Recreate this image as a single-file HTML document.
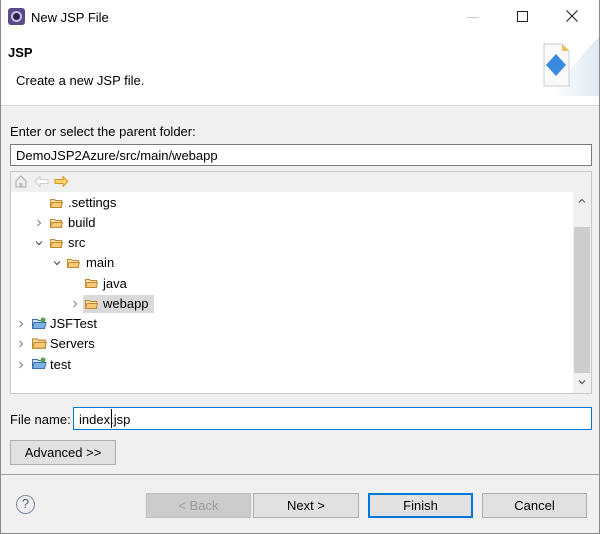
<!DOCTYPE html>
<html><head><meta charset="utf-8"><style>
*{margin:0;padding:0;box-sizing:border-box}
body{width:600px;height:534px;position:relative;overflow:hidden;background:#f0f0f0;font-family:"Liberation Sans",sans-serif;font-size:12.5px;color:#000}
.a{position:absolute}
.win{position:absolute;left:0;top:0;width:600px;height:534px;border:1px solid #8a8a8a;border-top:none;pointer-events:none}
.t{position:absolute;white-space:nowrap}
.btn{position:absolute;height:25px;border:1px solid #adadad;background:#e1e1e1;text-align:center;line-height:23px;font-size:13px}
.fold{position:absolute;width:13px;height:10px}
.arr{position:absolute;width:8px;height:8px}
</style></head><body>
<svg width="0" height="0" style="position:absolute"><defs>
<symbol id="f" viewBox="0 0 13 10"><path d="M0.5 1.5h4l1 1h6v7h-11z" fill="#fbe0a8" stroke="#c08a30"/><path d="M2 4.5h10.5l-1.5 5h-10.5z" fill="#f6c877" stroke="#c08a30"/></symbol>
<symbol id="p" viewBox="0 0 15 12"><path d="M0.5 2.5h5l1 1h6v8h-12z" fill="#cfe3f6" stroke="#3a70b0"/><path d="M2 5.5h12l-1.5 6h-12z" fill="#7fb0e8" stroke="#3a70b0"/><circle cx="11" cy="3" r="2.5" fill="#5aa050"/></symbol>
<symbol id="r" viewBox="0 0 8 8"><path d="M2.5 1l3 3-3 3" fill="none" stroke="#888" stroke-width="1.2"/></symbol>
<symbol id="d" viewBox="0 0 8 8"><path d="M1 2.5l3 3 3-3" fill="none" stroke="#555" stroke-width="1.2"/></symbol>
</defs></svg>
<div class="a" style="left:0;top:0;width:600px;height:106px;background:#fff;border-bottom:1px solid #d5d5d5"></div>
<div class="a" style="left:8px;top:8px;width:17px;height:17px;background:#5a4a8a;border-radius:3px"></div>
<div class="a" style="left:11px;top:11px;width:11px;height:11px;background:#2a2050;border-radius:50%;border:2px solid #c8c0e0"></div>
<div class="t" style="left:31px;top:10px;font-size:13px">New JSP File</div>
<div class="a" style="left:467px;top:17px;width:12px;height:1px;background:#ccc"></div>
<div class="a" style="left:517px;top:11px;width:11px;height:11px;border:1px solid #222"></div>
<svg class="a" style="left:566px;top:10px" width="12" height="12"><path d="M0.5 0.5l11 11M11.5 0.5l-11 11" stroke="#222" stroke-width="1.1"/></svg>
<div class="t" style="left:8px;top:45px;font-weight:bold;font-size:13px">JSP</div>
<div class="t" style="left:16px;top:73px;font-size:13px">Create a new JSP file.</div>
<svg class="a" style="left:530px;top:36px" width="70" height="60"><defs><linearGradient id="g" x1="0" x2="1"><stop offset="0" stop-color="#fff"/><stop offset="1" stop-color="#dfe8f2"/></linearGradient></defs><path d="M20 60 Q50 20 70 0 V60Z" fill="url(#g)"/><path d="M14 8h18l7 7v35H14z" fill="#fafafa" stroke="#ccc"/><path d="M32 8v7h7" fill="#f0c060"/><path d="M26 18l10 11-10 11-10-11z" fill="#3a8be0"/></svg>
<div class="t" style="left:10px;top:124px;font-size:13px">Enter or select the parent folder:</div>
<div class="a" style="left:10px;top:144px;width:582px;height:22px;background:#fff;border:1px solid #7a7a7a"></div>
<div class="t" style="left:16px;top:148px;font-size:13px">DemoJSP2Azure/src/main/webapp</div>
<div class="a" style="left:10px;top:171px;width:582px;height:223px;border:1px solid #c8c8c8;background:#f0f0f0"></div>
<svg class="a" style="left:15px;top:175px" width="12" height="13"><path d="M1 6l5-5 5 5v6H1z" fill="#eee" stroke="#aaa"/><rect x="4.5" y="8" width="3" height="4" fill="#bbb"/></svg>
<svg class="a" style="left:34px;top:176px" width="15" height="11"><path d="M1 5.5l5-5v3h8v4H6v3z" fill="#fff" stroke="#ccc"/></svg>
<svg class="a" style="left:54px;top:176px" width="15" height="11"><path d="M14 5.5l-5-5v3H1v4h8v3z" fill="#fcd26a" stroke="#d49a20"/></svg>
<div class="a" style="left:11px;top:192px;width:562px;height:201px;background:#fff"></div>
<div class="a" style="left:573px;top:192px;width:18px;height:201px;background:#f0f0f0"></div>
<div class="a" style="left:574px;top:227px;width:16px;height:146px;background:#cdcdcd"></div>
<svg class="a" style="left:578px;top:197px" width="8" height="8" style="transform:rotate(180deg)"><path d="M1 5.5l3-3 3 3" fill="none" stroke="#666" stroke-width="1.2"/></svg>
<svg class="a" style="left:578px;top:378px" width="8" height="8"><use href="#d"/></svg>
<div class="a" style="left:83px;top:295px;width:71px;height:18px;background:#d9d9d9"></div>
<svg class="fold" style="left:50px;top:198px"><use href="#f"/></svg><div class="t" style="left:68px;top:195px;font-size:13px">.settings</div>
<svg class="arr" style="left:35px;top:219px"><use href="#r"/></svg><svg class="fold" style="left:50px;top:218px"><use href="#f"/></svg><div class="t" style="left:68px;top:215px;font-size:13px">build</div>
<svg class="arr" style="left:35px;top:239px"><use href="#d"/></svg><svg class="fold" style="left:50px;top:238px"><use href="#f"/></svg><div class="t" style="left:68px;top:235px;font-size:13px">src</div>
<svg class="arr" style="left:53px;top:259px"><use href="#d"/></svg><svg class="fold" style="left:67px;top:258px"><use href="#f"/></svg><div class="t" style="left:86px;top:255px;font-size:13px">main</div>
<svg class="fold" style="left:85px;top:278px"><use href="#f"/></svg><div class="t" style="left:103px;top:276px;font-size:13px">java</div>
<svg class="arr" style="left:71px;top:300px"><use href="#r"/></svg><svg class="fold" style="left:85px;top:299px"><use href="#f"/></svg><div class="t" style="left:103px;top:296px;font-size:13px">webapp</div>
<svg class="arr" style="left:17px;top:320px"><use href="#r"/></svg><svg class="a" style="left:32px;top:317px" width="15" height="12"><use href="#p"/></svg><div class="t" style="left:50px;top:316px;font-size:13px">JSFTest</div>
<svg class="arr" style="left:17px;top:340px"><use href="#r"/></svg><svg class="a" style="left:32px;top:337px" width="15" height="12"><use href="#f"/></svg><div class="t" style="left:50px;top:336px;font-size:13px">Servers</div>
<svg class="arr" style="left:17px;top:361px"><use href="#r"/></svg><svg class="a" style="left:32px;top:357px" width="15" height="12"><use href="#p"/></svg><div class="t" style="left:50px;top:357px;font-size:13px">test</div>
<div class="t" style="left:10px;top:412px;font-size:13px">File name:</div>
<div class="a" style="left:73px;top:407px;width:519px;height:23px;background:#fff;border:1px solid #0078d7"></div>
<div class="t" style="left:79px;top:412px;font-size:13px">index.jsp</div>
<div class="a" style="left:111px;top:409px;width:1px;height:19px;background:#000"></div>
<div class="btn" style="left:10px;top:440px;width:106px">Advanced &gt;&gt;</div>
<div class="a" style="left:0;top:474px;width:600px;height:1px;background:#a0a0a0"></div>
<div class="a" style="left:16px;top:495px;width:19px;height:19px;border:1.5px solid #7a8aa0;border-radius:50%;text-align:center;line-height:16px;font-size:13px;color:#556">?</div>
<div class="btn" style="left:146px;top:493px;width:105px;background:#ccc;border-color:#bfbfbf;color:#999">&lt; Back</div>
<div class="btn" style="left:253px;top:493px;width:106px">Next &gt;</div>
<div class="btn" style="left:368px;top:493px;width:105px;border:2px solid #0078d7;line-height:21px">Finish</div>
<div class="btn" style="left:482px;top:493px;width:105px">Cancel</div>
<div class="win"></div>
</body></html>
